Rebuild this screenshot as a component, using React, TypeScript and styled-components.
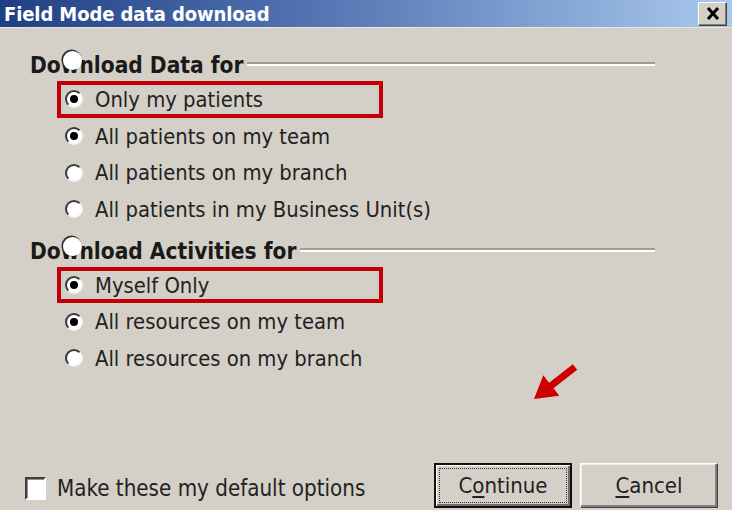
import styled, { createGlobalStyle } from "styled-components";

const GlobalStyle = createGlobalStyle`
  html, body {
    margin: 0;
    padding: 0;
    background: #d4d0c8;
  }
  body {
    font-family: "DejaVu Sans Condensed", "DejaVu Sans", sans-serif;
  }
`;

type OptionItem = {
  label: string;
  checked: boolean;
  highlighted?: boolean;
};

const dataOptions: OptionItem[] = [
  { label: "Only my patients", checked: true, highlighted: true },
  { label: "All patients on my team", checked: true },
  { label: "All patients on my branch", checked: false },
  { label: "All patients in my Business Unit(s)", checked: false },
];

const activityOptions: OptionItem[] = [
  { label: "Myself Only", checked: true, highlighted: true },
  { label: "All resources on my team", checked: true },
  { label: "All resources on my branch", checked: false },
];

export default function App() {
  return (
    <>
      <GlobalStyle />
      <Window>
        <TitleBar>
          <TitleText>Field Mode data download</TitleText>
          <CloseButton aria-label="Close">
            <svg width="14" height="13" viewBox="0 0 14 13">
              <path d="M2 1 L12 12 M12 1 L2 12" stroke="#000" strokeWidth="3" />
            </svg>
          </CloseButton>
        </TitleBar>
        <Body>
          <Group $top={22}>
            <GroupHeader>
              <HeaderText>Download Data for</HeaderText>
              <Rule />
              <StrayRadio />
            </GroupHeader>
            <OptionList $offset={1}>
              {dataOptions.map((o) => (
                <OptionRow key={o.label} $highlighted={o.highlighted}>
                  <Radio $checked={o.checked} />
                  <OptionLabel>{o.label}</OptionLabel>
                </OptionRow>
              ))}
            </OptionList>
          </Group>
          <Group $top={8}>
            <GroupHeader>
              <HeaderText>Download Activities for</HeaderText>
              <Rule />
              <StrayRadio />
            </GroupHeader>
            <OptionList $offset={1}>
              {activityOptions.map((o) => (
                <OptionRow key={o.label} $highlighted={o.highlighted}>
                  <Radio $checked={o.checked} />
                  <OptionLabel>{o.label}</OptionLabel>
                </OptionRow>
              ))}
            </OptionList>
          </Group>

          <Arrow width="60" height="50" viewBox="0 0 60 50">
            <polygon
              points="9,41 34.3,37.7 28.5,30.3 52.2,11.8 47.8,6.2 24.1,24.7 18.3,17.3"
              fill="#cc0000"
            />
          </Arrow>

          <Footer>
            <CheckRow>
              <CheckBox />
              <CheckLabel>Make these my default options</CheckLabel>
            </CheckRow>
            <Buttons>
              <DialogButton $default>
                <FocusRect>
                  C<u>o</u>ntinue
                </FocusRect>
              </DialogButton>
              <DialogButton>
                <FocusRect $hidden>
                  <u>C</u>ancel
                </FocusRect>
              </DialogButton>
            </Buttons>
          </Footer>
        </Body>
      </Window>
    </>
  );
}

const Window = styled.div`
  width: 732px;
  height: 510px;
  overflow: hidden;
  display: flex;
  flex-direction: column;
  background: #d4d0c8;
  color: #1c1c1c;
`;

const TitleBar = styled.div`
  height: 28px;
  flex-shrink: 0;
  display: flex;
  align-items: center;
  justify-content: space-between;
  padding: 0 5px 0 4px;
  background: linear-gradient(90deg, #203f82 0%, #5577b4 45%, #a9c9ee 100%);
  border-bottom: 1px solid #e8e6e0;
  box-sizing: border-box;
`;

const TitleText = styled.span`
  color: #ffffff;
  font-weight: bold;
  font-size: 20px;
  letter-spacing: -0.1px;
`;

const CloseButton = styled.button`
  width: 29px;
  height: 24px;
  padding: 0;
  display: flex;
  align-items: center;
  justify-content: center;
  background: #d4d0c8;
  border: 1px solid;
  border-color: #ffffff #404040 #404040 #ffffff;
  box-shadow: inset -1px -1px 0 #808080;
`;

const Body = styled.div`
  position: relative;
  flex: 1;
  display: flex;
  flex-direction: column;
  padding-left: 30px;
`;

const Group = styled.section<{ $top: number }>`
  width: 625px;
  margin-top: ${(p) => p.$top}px;
  display: flex;
  flex-direction: column;
`;

const GroupHeader = styled.div`
  position: relative;
  height: 30px;
  display: flex;
  align-items: center;
  gap: 4px;
`;

const HeaderText = styled.span`
  font-weight: bold;
  font-size: 22.5px;
  color: #1a1a1a;
  white-space: nowrap;
`;

const Rule = styled.span`
  flex: 1;
  height: 0;
  margin-top: -2px;
  border-top: 2px solid #a09c96;
  border-bottom: 2px solid #ffffff;
`;

const StrayRadio = styled.span`
  position: absolute;
  left: 33px;
  top: 1px;
  width: 19px;
  height: 19px;
  border-radius: 50%;
  background: #ffffff;
  box-shadow: -1px -1px 0 0.5px #303030;
`;

const OptionList = styled.div<{ $offset?: number }>`
  display: flex;
  flex-direction: column;
  margin-left: 27px;
  margin-top: ${(p) => p.$offset ?? 0}px;
`;

const OptionRow = styled.div<{ $highlighted?: boolean }>`
  width: 326px;
  height: 36.7px;
  box-sizing: border-box;
  display: flex;
  align-items: center;
  gap: 12px;
  padding-left: 4px;
  border: 4px solid ${(p) => (p.$highlighted ? "#c30008" : "transparent")};
`;

const Radio = styled.span<{ $checked: boolean }>`
  position: relative;
  flex-shrink: 0;
  width: 18px;
  height: 18px;
  border-radius: 50%;
  background: #ffffff;
  box-sizing: border-box;
  border: 2px solid;
  border-color: #3a3a3a #f4f4f4 #f4f4f4 #3a3a3a;
  &::after {
    content: "";
    display: ${(p) => (p.$checked ? "block" : "none")};
    position: absolute;
    left: 3px;
    top: 3px;
    width: 8px;
    height: 8px;
    border-radius: 50%;
    background: #000000;
  }
`;

const OptionLabel = styled.span`
  font-size: 21.8px;
  color: #222222;
  white-space: nowrap;
`;

const Arrow = styled.svg`
  position: absolute;
  left: 525px;
  top: 330px;
`;

const Footer = styled.div`
  margin-top: auto;
  margin-left: -5px;
  padding: 0 14px 2px 0;
  display: flex;
  align-items: center;
  justify-content: space-between;
`;

const CheckRow = styled.label`
  display: flex;
  align-items: center;
  gap: 11px;
  margin-top: 5px;
`;

const CheckBox = styled.span`
  width: 21px;
  height: 23px;
  box-sizing: border-box;
  background: #ffffff;
  border: 2px solid;
  border-color: #404040 #ffffff #ffffff #404040;
  box-shadow: inset 1px 1px 0 #909090;
`;

const CheckLabel = styled.span`
  font-size: 22.2px;
  color: #222222;
  white-space: nowrap;
`;

const Buttons = styled.div`
  display: flex;
  gap: 8px;
`;

const DialogButton = styled.button<{ $default?: boolean }>`
  width: 138px;
  height: 45px;
  padding: 3px;
  box-sizing: border-box;
  display: flex;
  background: #d4d0c8;
  font-family: "DejaVu Sans Condensed", "DejaVu Sans", sans-serif;
  font-size: 22px;
  color: #222222;
  border: ${(p) => (p.$default ? "2px solid #111111" : "1px solid")};
  border-color: ${(p) => (p.$default ? "#111111" : "#ffffff #404040 #404040 #ffffff")};
  box-shadow: ${(p) =>
    p.$default
      ? "inset 1px 1px 0 #ffffff, inset -2px -2px 0 #707070"
      : "inset -2px -2px 0 #808080, inset 1px 1px 0 #f0f0f0"};
`;

const FocusRect = styled.span<{ $hidden?: boolean }>`
  flex: 1;
  display: flex;
  align-items: center;
  justify-content: center;
  border: 1px dotted ${(p) => (p.$hidden ? "transparent" : "#333333")};
  u {
    text-underline-offset: 3px;
  }
`;
